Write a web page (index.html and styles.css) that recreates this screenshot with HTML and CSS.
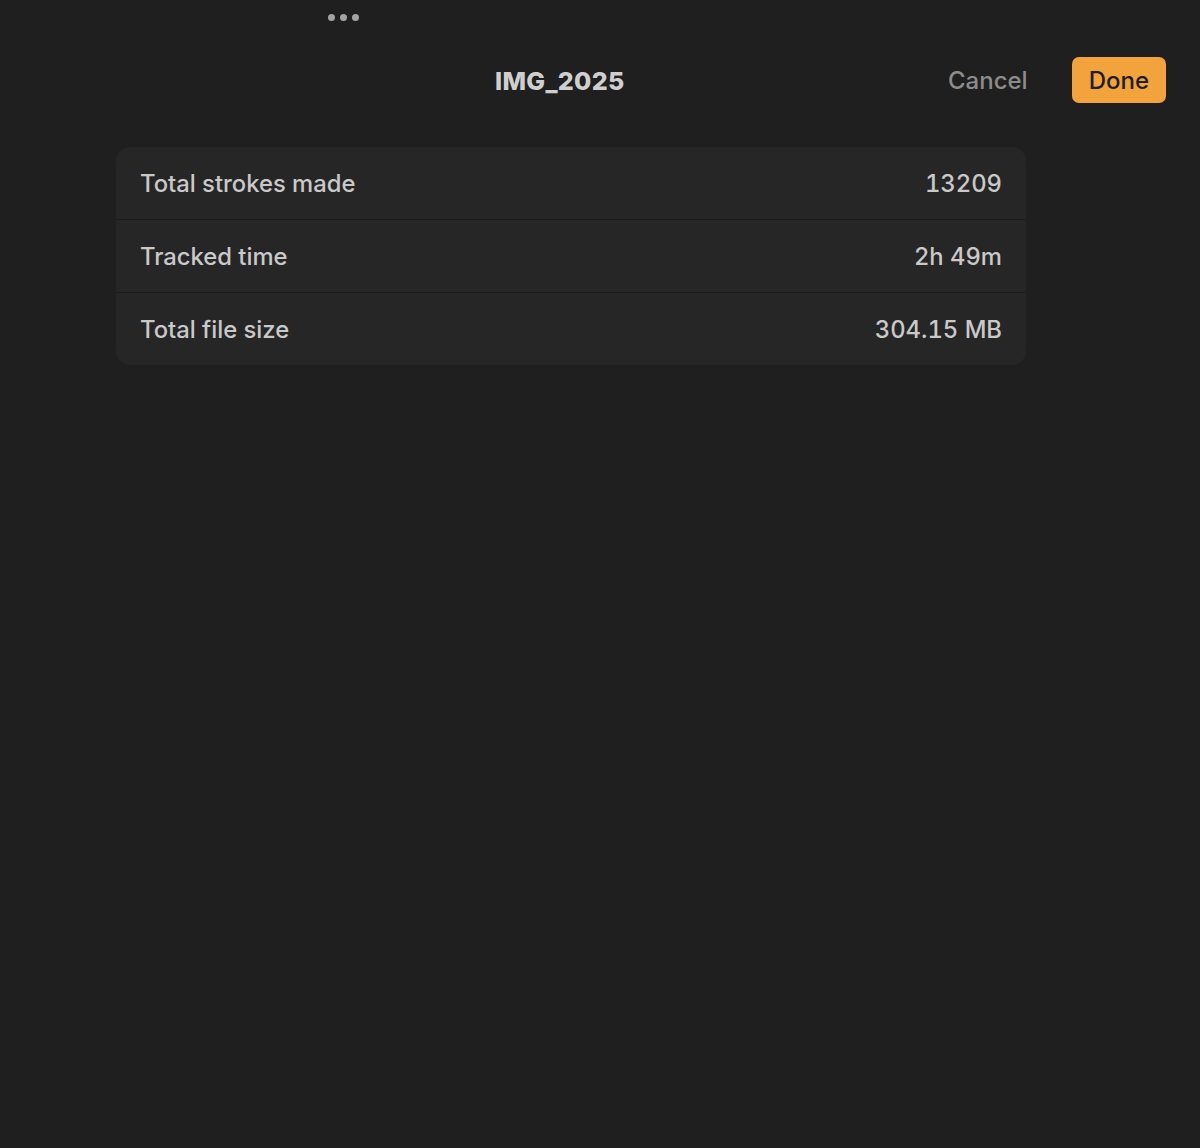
FILE: index.html
```html
<!DOCTYPE html>
<html lang="en">
<head>
    <meta charset="UTF-8">
    <title>IMG_2025</title>
    <link rel="stylesheet" href="styles.css">
</head>
<body>
    <div class="handle">
        <span class="dot"></span>
        <span class="dot"></span>
        <span class="dot"></span>
    </div>

    <header class="topbar">
        <h1 class="title">IMG_2025</h1>
        <div class="actions">
            <button class="cancel">Cancel</button>
            <button class="done">Done</button>
        </div>
    </header>

    <main class="stats">
        <div class="row">
            <span class="label">Total strokes made</span>
            <span class="value">13209</span>
        </div>
        <div class="row">
            <span class="label">Tracked time</span>
            <span class="value">2h 49m</span>
        </div>
        <div class="row">
            <span class="label">Total file size</span>
            <span class="value">304.15 MB</span>
        </div>
    </main>
</body>
</html>
```

FILE: styles.css
```css
body {
    margin: 0;
    height: 1148px;
    background-color: #1f1f1f;
    font-family: Inter, "Noto Sans", sans-serif;
    color: #c9c9c9;
}
.handle {
    display: flex;
    gap: 5px;
    padding: 14px 0 0 328px;
    height: 7px;
}
.dot {
    width: 7px;
    height: 7px;
    border-radius: 50%;
    background-color: #a3a3a3;
}
.topbar {
    display: flex;
    align-items: center;
    height: 46px;
    margin-top: 36px;
    padding: 0 34px 0 495px;
}
.title {
    margin: 0;
    padding-top: 2px;
    font-size: 25px;
    font-weight: 800;
    color: #cfcfcf;
    letter-spacing: 0.3px;
}
.actions {
    margin-left: auto;
    display: flex;
    align-items: center;
    gap: 44px;
}
button {
    font-family: inherit;
    font-size: 24px;
    font-weight: 500;
    border: none;
    cursor: pointer;
}
.cancel {
    background: none;
    color: #8c8c8c;
    padding: 0;
}
.done {
    background-color: #f2a33c;
    color: #1e1e1e;
    height: 46px;
    padding: 0 17px;
    border-radius: 7px;
}
.stats {
    width: 910px;
    margin: 44px 0 0 116px;
    background-color: #262626;
    border-radius: 14px;
    overflow: hidden;
}
.row {
    display: flex;
    justify-content: space-between;
    align-items: center;
    height: 72px;
    padding: 0 24px;
    font-size: 23.8px;
    font-weight: 500;
}
.row + .row {
    border-top: 1px solid #1c1c1c;
}
.value {
    font-variant-numeric: tabular-nums;
}
```
